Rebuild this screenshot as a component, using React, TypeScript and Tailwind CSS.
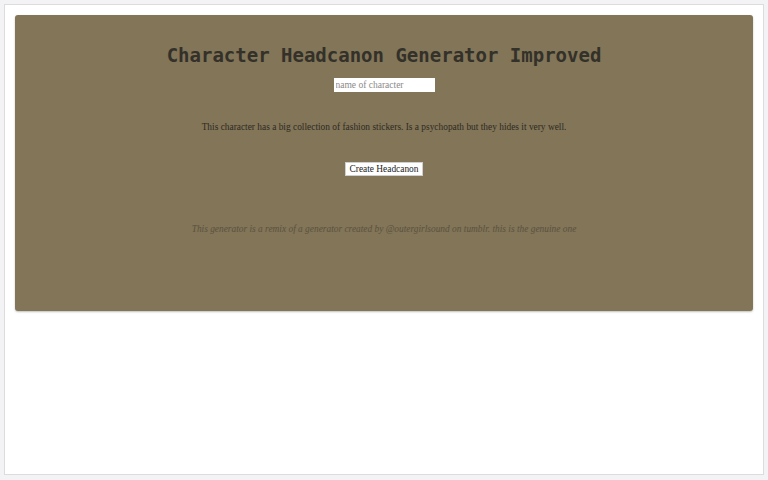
import { useState } from 'react';

const traits = [
    'has a big collection of fashion stickers.',
    'Is a psychopath but they hides it very well.',
];

export default function App() {
    const [name, setName] = useState('');

    return (
        <div className="h-[480px] w-[768px] bg-[#f3f3f5] p-[4px]">
            <div className="h-[471px] border border-[#dcdcdc] bg-white p-[10px]">
                {/* generator card */}
                <div className="flex h-[296px] flex-col items-center rounded-[3px] bg-[#827558] pt-[29px] shadow-[0_1px_2px_rgba(0,0,0,0.25)] font-['Liberation_Serif',serif] text-[#2e2a22]">
                    <h1 className="font-['DejaVu_Sans_Mono',monospace] text-[19px] font-bold leading-[22px] text-[#333129]">
                        Character Headcanon Generator Improved
                    </h1>
                    <input
                        value={name}
                        onChange={(e) => setName(e.target.value)}
                        placeholder="name of character"
                        className="mt-[12px] h-[14px] w-[101px] bg-white px-[2px] text-[9.5px] leading-[14px] text-[#333] outline-none placeholder:text-[#8a8a8a]"
                    />
                    <p className="mt-[29px] text-[9.4px] leading-[12px]">
                        This character {traits.join(' ')}
                    </p>
                    <button className="mt-[29px] h-[14px] border border-[#cfcfcf] bg-white px-[4px] text-[9.4px] leading-[12px] text-[#222]">
                        Create Headcanon
                    </button>
                    <p className="mt-[47px] text-[9.4px] italic leading-[12px] text-[#5b513f]">
                        This generator is a remix of a generator created by @outergirlsound on tumblr. this is the genuine one
                    </p>
                </div>
            </div>
        </div>
    );
}
